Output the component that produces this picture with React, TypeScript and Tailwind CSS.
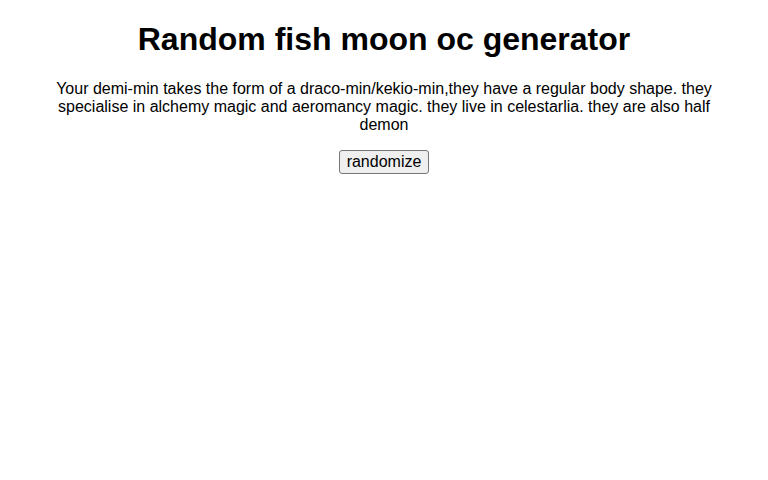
import { useState } from "react";

const forms = ["draco-min/kekio-min", "aqua-min", "lumi-min", "shadow-min"];
const shapes = ["regular", "serpentine", "stocky", "slender"];
const magics = ["alchemy", "aeromancy", "pyromancy", "hydromancy", "necromancy"];
const places = ["celestarlia", "the deep trench", "the coral reef", "the moon pools"];
const extras = ["half demon", "half angel", "cursed", "royalty"];

const pick = <T,>(list: T[]) => list[Math.floor(Math.random() * list.length)];

export default function App() {
  const [oc, setOc] = useState({
    form: forms[0],
    shape: shapes[0],
    magicA: magics[0],
    magicB: magics[1],
    place: places[0],
    extra: extras[0],
  });

  const randomize = () =>
    setOc({
      form: pick(forms),
      shape: pick(shapes),
      magicA: pick(magics),
      magicB: pick(magics),
      place: pick(places),
      extra: pick(extras),
    });

  // one string so the sentence wraps as a single text run
  const description = `Your demi-min takes the form of a ${oc.form},they have a ${oc.shape} body shape. they specialise in ${oc.magicA} magic and ${oc.magicB} magic. they live in ${oc.place}. they are also ${oc.extra}`;

  return (
    <div className="min-h-[480px] bg-white px-2 text-center font-['Liberation_Sans',Arial,sans-serif] text-black">
      <h1 className="pt-[21.44px] text-[32px] font-bold leading-[normal]">
        Random fish moon oc generator
      </h1>
      <p className="mx-10 mt-[21.44px] text-base leading-[normal]">{description}</p>
      <button
        onClick={randomize}
        className="mt-4 rounded-[3px] border border-[#767676] bg-[#efefef] px-[7px] py-[2px] text-base leading-[normal] hover:bg-[#e5e5e5]"
      >
        randomize
      </button>
    </div>
  );
}
